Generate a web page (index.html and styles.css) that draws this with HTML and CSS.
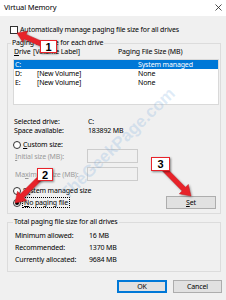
FILE: index.html
```html
<!DOCTYPE html>
<html lang="en">
<head>
<meta charset="utf-8">
<title>Virtual Memory</title>
<link rel="stylesheet" href="styles.css">
</head>
<body>
<div class="window">
  <div class="titlebar">
    <span class="title">Virtual Memory</span>
    <svg class="close" width="7" height="7" viewBox="0 0 7 7"><path d="M0.5 0.5L6.5 6.5M6.5 0.5L0.5 6.5" stroke="#222" stroke-width="0.8" fill="none"/></svg>
  </div>
  <div class="content">
    <div class="check-row"><span class="checkbox"></span><span><u>A</u>utomatically manage paging file size for all drives</span></div>

    <fieldset class="group drives">
      <legend>Paging file size for each drive</legend>
      <div class="list-head"><span class="h1"><u>D</u>rive</span><span class="h2">[Volume Label]</span><span>Paging File Size (MB)</span></div>
      <div class="list">
        <div class="row sel"><span class="c1">C:</span><span class="c2"></span><span>System managed</span></div>
        <div class="row"><span class="c1">D:</span><span class="c2">[New Volume]</span><span>None</span></div>
        <div class="row"><span class="c1">E:</span><span class="c2">[New Volume]</span><span>None</span></div>
      </div>
      <div class="info">
        <div class="kv"><span class="k">Selected drive:</span><span>C:</span></div>
        <div class="kv"><span class="k">Space available:</span><span>183892 MB</span></div>
      </div>
      <div class="radio-row custom"><span class="radio"></span><span><u>C</u>ustom size:</span></div>
      <div class="size-row"><span class="sk"><u>I</u>nitial size (MB):</span><span class="input"></span></div>
      <div class="size-row second"><span class="sk">Ma<u>x</u>imum size (MB):</span><span class="input"></span></div>
      <div class="radio-row sys"><span class="radio"></span><span>S<u>y</u>stem managed size</span></div>
      <div class="radio-row last">
        <span class="radio checked"></span><span class="focus"><u>N</u>o paging file</span>
        <button class="btn set" type="button"><u>S</u>et</button>
      </div>
    </fieldset>

    <fieldset class="group total">
      <legend>Total paging file size for all drives</legend>
      <div class="trow"><span class="tk">Minimum allowed:</span><span>16 MB</span></div>
      <div class="trow"><span class="tk">Recommended:</span><span>1370 MB</span></div>
      <div class="trow"><span class="tk">Currently allocated:</span><span>9684 MB</span></div>
    </fieldset>

    <div class="buttons">
      <button class="btn default" type="button">OK</button>
      <button class="btn" type="button">Cancel</button>
    </div>
  </div>

  <span class="watermark">TheGeekPage.com</span>

  <svg class="arrows" width="226" height="300" viewBox="0 0 226 300">
    <g fill="#e8232a" stroke="#c41a20" stroke-width="0.5" stroke-linejoin="round">
      <polygon points="45.0,42.7 26.2,34.4 27.6,31.2 17,33 22.8,42.2 24.2,39.0 43.0,47.3"/>
      <polygon points="38.2,176.2 20.3,194.1 17.5,191.3 15,203 26.7,200.5 23.9,197.7 41.8,179.8"/>
      <polygon points="162.3,170.8 182.1,190.9 179.3,193.8 191,196 188.3,184.4 185.5,187.3 165.7,167.2"/>
    </g>
  </svg>
  <div class="badge b1">1</div>
  <div class="badge b2">2</div>
  <div class="badge b3">3</div>
</div>
</body>
</html>
```

FILE: styles.css
```css
* { box-sizing: border-box; }
html, body { margin: 0; padding: 0; }
body {
  width: 226px;
  height: 300px;
  overflow: hidden;
  background: #f0f0f0;
  font-family: "Noto Sans", "Open Sans", sans-serif;
  font-size: 7px;
  letter-spacing: -0.15px;
  color: #000;
}
.window { position: relative; width: 226px; height: 300px; }

.titlebar {
  height: 16px;
  background: #fff;
  display: flex;
  align-items: center;
  justify-content: space-between;
  padding: 0 4px 2px 4px;
  font-size: 7.5px;
}
.close { display: block; }

.content { padding: 0 5px 0 7px; }

.check-row {
  margin-top: 9px;
  height: 9px;
  display: flex;
  align-items: center;
  gap: 2px;
  padding-left: 3px;
  line-height: 9px;
}
.checkbox {
  width: 8px; height: 8px;
  border: 1px solid #333;
  background: #fff;
  flex: none;
}

.group {
  margin: 0;
  min-width: 0;
  border: 1px solid #dcdcdc;
}
.group legend {
  padding: 0 1px;
  margin-left: -2px;
  line-height: 8px;
  height: 8px;
}
.drives { margin-top: 5px; padding: 0 1px 4px 5px; }

.list-head {
  margin: 1px 0 0 1px;
  height: 8px;
  line-height: 8px;
  display: flex;
}
.list-head .h1 { width: 19px; }
.list-head .h2 { width: 85px; }

.list {
  margin-top: 3px;
  height: 46px;
  background: #fff;
  border: 1px solid #d9d9d9;
}
.row {
  height: 9px;
  line-height: 9px;
  display: flex;
  padding-left: 1px;
}
.row.sel { background: #0078d7; color: #fff; }
.row .c1 { width: 22px; }
.row .c2 { width: 101px; }

.info { margin: 12px 0 0 1px; }
.kv { height: 9px; line-height: 9px; display: flex; }
.kv .k { width: 74px; }

.radio-row {
  display: flex;
  align-items: center;
  gap: 2px;
  height: 9px;
  line-height: 9px;
}
.radio-row.custom { margin-top: 5px; }
.radio-row.sys { margin-top: 5px; }
.radio-row.last { margin-top: 1px; height: 13px; }
.radio {
  width: 8px; height: 8px;
  border: 1px solid #333;
  border-radius: 50%;
  background: #fff;
  flex: none;
  display: flex;
  align-items: center;
  justify-content: center;
}
.radio.checked::after {
  content: "";
  width: 4px; height: 4px;
  border-radius: 50%;
  background: #000;
}
.focus { outline: 1px dotted #000; outline-offset: 0; line-height: 9px; padding: 0 1px; }

.size-row {
  display: flex;
  align-items: center;
  height: 14px;
  margin-left: 2px;
}
.size-row.second { margin-top: 4px; }
.sk { width: 72px; color: #9a9a9a; }
.input {
  width: 51px; height: 14px;
  border: 1px solid #cccccc;
  background: #f0f0f0;
}

.btn {
  font: inherit;
  letter-spacing: inherit;
  color: #000;
  background: #e1e1e1;
  border: 1px solid #adadad;
  padding: 0;
  height: 13px;
  line-height: 11px;
  width: 50px;
}
.set { margin-left: auto; margin-right: 3px; }

.total { margin-top: 4px; padding: 4px 1px 5px 7px; }
.trow { height: 12px; line-height: 12px; display: flex; }
.tk { width: 74px; }

.buttons {
  margin-top: 8px;
  margin-right: -1px;
  display: flex;
  justify-content: flex-end;
  gap: 6px;
}
.btn.default { border-color: #0078d7; box-shadow: inset 0 0 0 1px #0078d7; }
.buttons .btn { height: 13px; }
.buttons .btn:last-child { width: 49px; }

.watermark {
  position: absolute;
  left: 42px;
  top: 134px;
  font-family: "Liberation Sans", sans-serif;
  font-weight: bold;
  font-size: 17px;
  letter-spacing: 0;
  color: rgba(110, 165, 220, 0.22);
  transform: rotate(-44deg);
  transform-origin: center;
  white-space: nowrap;
}

.arrows { position: absolute; left: 0; top: 0; pointer-events: none; filter: drop-shadow(1px 1px 1px rgba(0,0,0,0.35)); }

.badge {
  position: absolute;
  background: #fff;
  border: 1.5px solid #e8232a;
  box-shadow: 1px 1px 2px rgba(0,0,0,0.45);
  font-family: "Liberation Sans", sans-serif;
  font-weight: bold;
  font-size: 11px;
  letter-spacing: 0;
  display: flex;
  align-items: center;
  justify-content: center;
}
.b1 { left: 40px; top: 40px; width: 17px; height: 13px; }
.b2 { left: 37px; top: 168px; width: 16px; height: 13px; }
.b3 { left: 151px; top: 157px; width: 19px; height: 14px; }
```
